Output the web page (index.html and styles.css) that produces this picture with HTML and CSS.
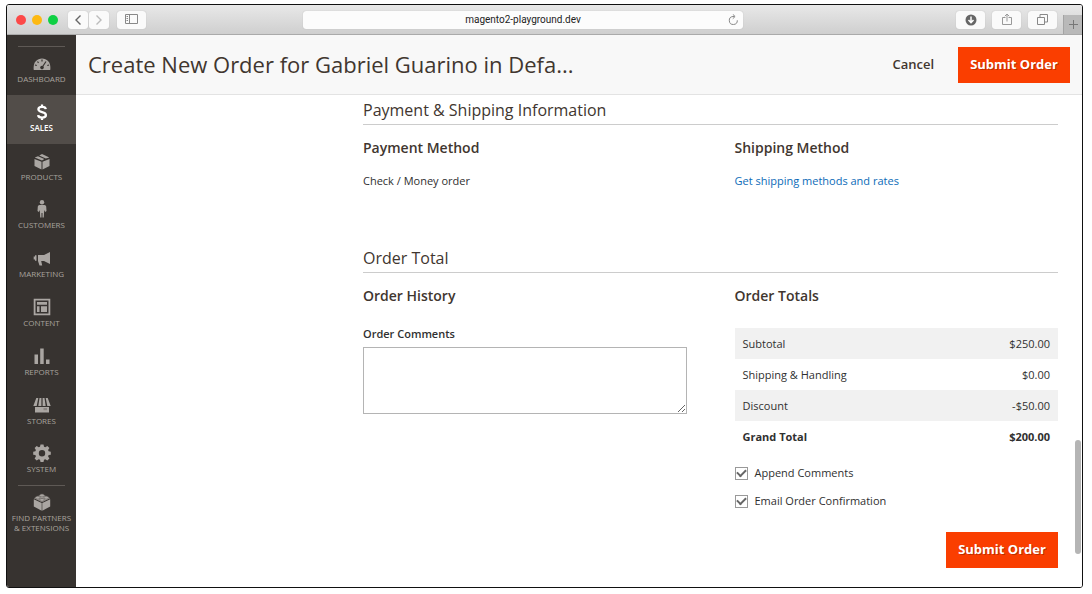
FILE: index.html
```html
<!DOCTYPE html>
<html lang="en">
<head>
<meta charset="utf-8">
<title>Create New Order</title>
<link rel="stylesheet" href="styles.css">
</head>
<body>
<div class="window">
  <div class="toolbar">
    <div class="lights"><span class="light red"></span><span class="light amber"></span><span class="light green"></span></div>
    <div class="history">
      <button class="tool back" aria-label="Back"><svg width="8" height="12" viewBox="0 0 8 12"><path d="M6.500 1.500 2 6l4.500 4.500" fill="none" stroke="#666" stroke-width="1.400"/></svg></button>
      <button class="tool forward" aria-label="Forward"><svg width="8" height="12" viewBox="0 0 8 12"><path d="M1.500 1.500 6 6l-4.500 4.500" fill="none" stroke="#bbb" stroke-width="1.400"/></svg></button>
    </div>
    <button class="tool" aria-label="Sidebar"><svg width="13" height="11" viewBox="0 0 13 11"><path d="M.5.500h12v9H.5zM4.500.500v9M1.500 2.500H3M1.500 4.500H3M1.500 6.500H3" fill="none" stroke="#888"/></svg></button>
    <div class="address-zone"><div class="address">
      <input class="url" type="text" value="magento2-playground.dev" aria-label="Address">
      <button class="reload" aria-label="Reload"><svg width="11" height="12" viewBox="0 0 11 12"><path d="M6.500 2.500H5a4 4 0 1 0 4.300 3.800M4.800.3l2.300 2.200-2.300 2.200" fill="none" stroke="#888"/></svg></button>
    </div></div>
    <div class="tools">
      <button class="tool" aria-label="Downloads"><svg width="12" height="12" viewBox="0 0 12 12"><circle cx="6" cy="6" r="5.500" fill="#666"/><path d="M6 2.500v6M3.500 6 6 8.700 8.500 6" fill="none" stroke="#fff" stroke-width="1.500"/></svg></button>
      <button class="tool" aria-label="Share"><svg width="10" height="13" viewBox="0 0 10 13"><path d="M3.500 4.500h-3v7h9v-7h-3M5 8.500V1M2.800 3.200 5 1l2.200 2.200" fill="none" stroke="#999"/></svg></button>
      <button class="tool" aria-label="Tabs"><svg width="11" height="11" viewBox="0 0 11 11"><path d="M.5 3.500h7v7h-7zM3 3.500v-3h7.500V8h-3" fill="none" stroke="#888"/></svg></button>
    </div>
    <button class="new-tab" aria-label="New tab"><svg width="9" height="9" viewBox="0 0 9 9"><path d="M4.500 0v9M0 4.500h9" stroke="#777"/></svg></button>
  </div>
  <div class="app">
    <nav class="menu">
      <div class="menu-items">
      <a class="item first" href="#"><svg viewBox="0 0 18 18"><path d="M.8 16C-.3 9 3.500 4.500 9 4.500s9.300 4.500 8.200 11.500z"/><path d="M9 13.500 13 7.500M9 5.500v2M4.500 7.500l1 1.300M2 11l1.800.5M16 11l-1.700.5" fill="none" stroke="#373330" stroke-width="1.200"/><circle cx="9" cy="13.600" r="1.800" fill="#373330"/></svg>Dashboard</a>
      <a class="item active" href="#"><svg viewBox="0 0 18 18"><path d="M12.800 6.200C12.600 4.600 11.100 3.800 9.100 3.800c-2.300 0-3.700.9-3.700 2.500 0 3.700 7.500 1.900 7.500 5.700 0 1.700-1.500 2.600-3.800 2.600-2.200 0-3.800-.8-4-2.500M9 1.500v2.500M9 14.500V17" fill="none" stroke="#fff" stroke-width="2.300"/></svg>Sales</a>
      <a class="item" href="#"><svg viewBox="0 0 18 18"><path d="M1.500 7l7 2.800V17.500l-7-3.500zM16.500 7 9.500 9.800v7.700l7-3.500zM1.700 5.500 5 4.200l6.300 2.900L9 8.500zM6.200 3.400 9 2l7.300 3.500-3.500 1.100z"/></svg>Products</a>
      <a class="item" href="#"><svg viewBox="0 0 18 18"><circle cx="9" cy="2.200" r="2.200"/><path d="M6.500 5h5q1.500 0 1.700 1.500l.3 4.500-1.300 1-1-2-.4 7.500H9.500V13h-1v4.500H7.200L6.800 10l-1 2-1.300-1 .3-4.500Q5 5 6.500 5z"/></svg>Customers</a>
      <a class="item" href="#"><svg viewBox="0 0 18 18"><path d="M17 3v12l-6-3H8.200l1 4.500H6.500L5 12V6h6zM3.500 6.200v5.500H2V10.500H.7V7.500H2V6.200z"/></svg>Marketing</a>
      <a class="item" href="#"><svg viewBox="0 0 18 18"><path d="M.7.700h16.600v16.600H.7zM2.500 2.500v13h13v-13z" fill-rule="evenodd"/><path d="M4 4h10v2.800H4zM4 8.300h2.500V14H4zM8 8.300h6V14H8z"/></svg>Content</a>
      <a class="item" href="#"><svg viewBox="0 0 18 18"><path d="M1.500 7.500H5V17H1.500zM7.200 1.500h3.500V17H7.200zM13 12.500h3.500V17H13z"/></svg>Reports</a>
      <a class="item" href="#"><svg viewBox="0 0 18 18"><path d="M3.300 2h2L3.700 10H.3zM6.500 2h1.900v8H5.300zM9.600 2h1.900l1.200 8H9.600zM12.700 2h2l3 8h-3.400zM2 11h14v5.500H2z"/><path d="M10.500 12h3.500v2.200h-3.500z" fill="#8a8581"/></svg>Stores</a>
      <a class="item" href="#"><svg viewBox="0 0 18 18"><path d="M7.500.5h3l.5 2.300 1.300.5 2-1.300L16.400 4l-1.300 2 .5 1.300 2.200.4v3l-2.200.4-.5 1.300 1.300 2-2.100 2.100-2-1.300-1.300.5-.5 2.200h-3L7 15.700l-1.300-.5-2 1.300-2.100-2.100 1.300-2-.5-1.300L.2 10.700v-3l2.200-.4L2.900 6 1.600 4l2.100-2 2 1.300L7 2.800zM9 6a3.200 3.200 0 1 0 0 6.400A3.200 3.200 0 0 0 9 6z" fill-rule="evenodd"/></svg>System</a>
      <a class="item last" href="#"><svg viewBox="0 0 18 18"><path d="M.8 6.300 8.700 10v7.700L.8 13.500zM17.200 6.300 9.300 10v7.700l7.900-4.200zM1 5.200 9 1l8 4.200-8 3.900z"/><g stroke="#5a5652" stroke-width=".6"><ellipse cx="9" cy="2.500" rx="2.400" ry="1.500"/><ellipse cx="4.700" cy="4.700" rx="2.400" ry="1.500"/><ellipse cx="13.300" cy="4.700" rx="2.400" ry="1.500"/><ellipse cx="9" cy="6.900" rx="2.400" ry="1.500"/></g></svg>Find Partners<br>&amp; Extensions</a>
      </div>
    </nav>
    <main class="page">
      <header class="page-header">
        <h1>Create New Order for Gabriel Guarino in Defa...</h1>
        <button class="cancel">Cancel</button>
        <button class="submit">Submit Order</button>
      </header>
      <div class="content">
        <section class="section payment">
          <h2>Payment &amp; Shipping Information</h2>
          <div class="columns">
            <div><h3>Payment Method</h3><p class="text">Check / Money order</p></div>
            <div><h3>Shipping Method</h3><p class="text"><a class="link" href="#">Get shipping methods and rates</a></p></div>
          </div>
        </section>
        <section class="section">
          <h2>Order Total</h2>
          <div class="columns">
            <div>
              <h3>Order History</h3>
              <label class="comments-label" for="comments">Order Comments</label>
              <textarea class="comments" id="comments"></textarea>
            </div>
            <div>
              <h3>Order Totals</h3>
              <table class="totals">
                <tr><td>Subtotal</td><td>$250.00</td></tr>
                <tr><td>Shipping &amp; Handling</td><td>$0.00</td></tr>
                <tr><td>Discount</td><td>-$50.00</td></tr>
                <tr class="grand"><td>Grand Total</td><td>$200.00</td></tr>
              </table>
              <div class="checks">
                <label class="check"><input type="checkbox" checked>Append Comments</label>
                <label class="check"><input type="checkbox" checked>Email Order Confirmation</label>
              </div>
              <div class="actions"><button class="submit">Submit Order</button></div>
            </div>
          </div>
        </section>
      </div>
      <div class="scroll-thumb"></div>
    </main>
  </div>
</div>
</body>
</html>
```
FILE: styles.css
```css
* { box-sizing: border-box; }
body {
  margin: 0;
  padding: 4px 9px 6px 6px;
  background: #fff;
  color: #303030;
  font: 11px/16px "Open Sans", "Noto Sans", sans-serif;
}
h1, h2, h3, p { margin: 0; }
button, input, textarea { font: inherit; color: inherit; }
button { border: 0; padding: 0; background: none; cursor: pointer; }
svg { display: block; }

.window {
  display: flex;
  flex-direction: column;
  min-height: calc(100vh - 10px);
  border: 1px solid #111;
  border-radius: 3px;
  overflow: hidden;
}
.toolbar {
  display: flex;
  align-items: center;
  height: 30px;
  padding-left: 9px;
  background: linear-gradient(#e8e8e8, #cfcfcf);
  border-bottom: 1px solid #aaa;
}
.lights { display: flex; gap: 6px; margin-right: 10px; }
.light { width: 10px; height: 10px; border-radius: 50%; }
.red { background: #fc4948; }
.amber { background: #fdb912; }
.green { background: #0fd044; }
.history { display: flex; gap: 1px; margin-right: 8px; }
.tool {
  display: flex;
  align-items: center;
  justify-content: center;
  width: 29px;
  height: 18px;
  border-radius: 3px;
  background: #fafafa;
  box-shadow: 0 0 1px #aaa;
}
.back, .forward { width: 20px; }
.address-zone { flex: 1; display: flex; justify-content: center; }
.address {
  display: flex;
  align-items: center;
  width: 77%;
  max-width: 440px;
  height: 18px;
  padding: 0 4px;
  margin-right: 56px;
  border-radius: 3px;
  background: #fcfcfc;
  box-shadow: 0 0 1px #aaa;
}
.url {
  flex: 1;
  min-width: 0;
  height: 18px;
  padding: 0 0 0 11px;
  border: 0;
  background: none;
  color: #222;
  font: 10px/18px Roboto, "Liberation Sans", sans-serif;
  text-align: center;
}
.tools { display: flex; gap: 7px; margin-right: 6px; }
.new-tab {
  display: flex;
  align-items: center;
  justify-content: center;
  align-self: flex-end;
  width: 19px;
  height: 19px;
  background: #b9b9b9;
  border-left: 1px solid #a4a4a4;
}

.app { flex: 1; display: flex; }
.menu {
  width: 69px;
  flex: none;
  padding-top: 11px;
  background: #373330;
}
.menu-items {
  display: grid;
  grid-template-rows: repeat(10, minmax(0, 1fr));
  height: 488px;
}
.item {
  position: relative;
  display: flex;
  flex-direction: column;
  align-items: center;
  padding-top: 8px;
  color: #a8a39e;
  font-size: 8px;
  line-height: 10px;
  text-align: center;
  text-transform: uppercase;
  text-decoration: none;
  white-space: nowrap;
}
.item svg { flex: none; width: 18px; height: 18px; margin-bottom: 2px; fill: #aaa6a2; }
.first::before, .last::before {
  content: "";
  position: absolute;
  top: 0;
  left: 11px;
  right: 11px;
  border-top: 1px solid #5e5955;
}
.active { background: #524d49; color: #fff; font-weight: 600; }

.page { flex: 1; min-width: 0; position: relative; background: #fff; }
.page-header {
  display: flex;
  align-items: center;
  height: 60px;
  padding: 0 12px;
  background: #f8f8f8;
  border-bottom: 1px solid #e3e3e3;
}
h1 {
  flex: 1;
  min-width: 0;
  padding-bottom: 2px;
  overflow: hidden;
  text-overflow: ellipsis;
  white-space: nowrap;
  color: #41362f;
  font-size: 22px;
  line-height: 30px;
  font-weight: 400;
}
.cancel, .submit { padding-bottom: 2px; font-size: 13px; }
.cancel { margin-right: 24px; color: #41362f; font-weight: 600; }
.submit {
  height: 36px;
  width: 112px;
  background: #fa3e00;
  color: #fff;
  font-weight: 700;
  text-shadow: 1px 1px 0 rgba(0, 0, 0, .25);
}
.content { padding: 4px 24px 16px 287px; }
.payment { min-height: 148px; }
h2 {
  padding-bottom: 3px;
  border-bottom: 1px solid #ccc;
  color: #41362f;
  font-size: 16px;
  line-height: 22px;
  font-weight: 400;
}
.columns { display: grid; grid-template-columns: 1fr 1fr; column-gap: 48px; }
h3 {
  margin: 13px 0 15px;
  color: #41362f;
  font-size: 14px;
  line-height: 20px;
  font-weight: 600;
}
.link { color: #0c6bb8; text-decoration: none; }
.comments-label { display: block; margin: 20px 0 5px; font-weight: 600; }
.comments {
  display: block;
  width: 100%;
  height: 67px;
  border: 1px solid #b4b4b4;
  background: #fff;
  resize: vertical;
}
.totals { width: 100%; margin-top: 22px; border-collapse: collapse; }
.totals td { height: 31px; padding: 0 8px; }
.totals td:last-child { text-align: right; }
.totals tr:nth-child(odd) { background: #f1f1f1; }
.grand { font-weight: 700; }
.checks { display: flex; flex-direction: column; gap: 12px; margin-top: 13px; }
.check { display: flex; align-items: center; gap: 7px; }
.check input {
  appearance: none;
  width: 13px;
  height: 13px;
  margin: 0;
  border: 1px solid #999;
  background: #fff;
  display: grid;
  place-items: center;
}
.check input:checked::before {
  content: "";
  width: 7px;
  height: 4px;
  margin-bottom: 3px;
  border: solid #666;
  border-width: 0 0 2px 2px;
  transform: rotate(-45deg);
}
.actions { display: flex; justify-content: flex-end; margin-top: 23px; }
.scroll-thumb {
  position: absolute;
  right: 1px;
  bottom: 33px;
  width: 6px;
  height: 114px;
  border-radius: 3px;
  background: #b5b5b5;
}
```
